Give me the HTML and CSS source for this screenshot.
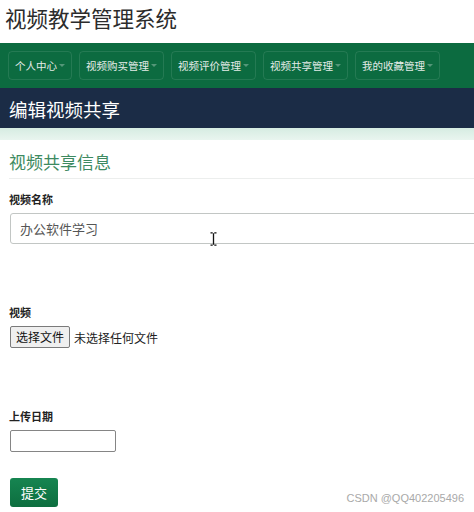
FILE: index.html
```html
<!DOCTYPE html>
<html lang="zh-CN">
<head>
  <meta charset="UTF-8" />
  <title>视频教学管理系统</title>
  <meta name="viewport" content="width=device-width, initial-scale=1.0">
  <link rel="stylesheet" href="styles.css">
</head>
<body>
  <div class="site-title">视频教学管理系统</div>

  <nav class="navbar">
    <a class="nav-item">个人中心</a>
    <a class="nav-item">视频购买管理</a>
    <a class="nav-item">视频评价管理</a>
    <a class="nav-item">视频共享管理</a>
    <a class="nav-item">我的收藏管理</a>
  </nav>

  <div class="page-head">编辑视频共享</div>
  <div class="page-strip"></div>

  <div class="content">
    <h3 class="section-title">视频共享信息</h3>

    <form class="share-form" onsubmit="return false;">
      <div class="field">
        <label>视频名称</label>
        <input type="text" class="text-input" value="办公软件学习">
        <svg class="ibeam" width="7" height="14" viewBox="0 0 7 14">
          <path d="M0.5 0.8h2.2M4.3 0.8h2.2M3.5 1.3v11.4M0.5 13.2h2.2M4.3 13.2h2.2" stroke="#111" stroke-width="1.3" fill="none"/>
        </svg>
      </div>

      <div class="field">
        <label>视频</label>
        <div class="file-row">
          <span class="file-btn">选择文件</span>
          <span class="file-name">未选择任何文件</span>
        </div>
      </div>

      <div class="field field-date">
        <label>上传日期</label>
        <input type="text" class="date-input">
      </div>

      <button class="submit-btn">提交</button>
    </form>
  </div>

  <div class="watermark">CSDN @QQ402205496</div>
</body>
</html>
```

FILE: styles.css
```css
html { overflow-x: hidden; }
body { margin: 0; font-family: "Noto Sans CJK SC", "Liberation Sans", sans-serif; color: #333; background: #fff; position: relative; min-height: 512px; overflow-x: hidden; }

.site-title { height: 43px; box-sizing: border-box; padding: 2px 5px 0; font-size: 21.5px; line-height: 32px; color: #2c2c2c; }

.navbar { background: #0c6b40; height: 45px; box-sizing: border-box; padding: 8px 8px; display: flex; gap: 7px; }
.nav-item { display: flex; align-items: center; height: 29px; box-sizing: border-box; padding: 0 6px; border: 1px solid rgba(255,255,255,0.1); border-radius: 4px; font-size: 10.5px; color: #e4ece8; }
.nav-item::after { content: ""; margin-left: 2px; border-left: 3px solid transparent; border-right: 3px solid transparent; border-top: 3px solid rgba(255,255,255,0.3); }

.page-head { background: #1b2c46; height: 40px; box-sizing: border-box; padding: 2px 9px 0; font-size: 18.5px; line-height: 38px; color: #fff; }
.page-strip { height: 12px; background: linear-gradient(#d6ece2, #e9f5ef); }

.content { padding: 0 0 0 9px; }
.section-title { margin: 10px 0 0; padding-bottom: 4px; font-size: 17px; font-weight: 400; line-height: 24px; color: #3d8a61; border-bottom: 1px solid #eceeed; }

.share-form { padding-top: 13px; }
.field { position: relative; margin-bottom: 61px; }
.field label { display: block; font-size: 11px; font-weight: 700; line-height: 14px; margin-bottom: 7px; color: #222; }
.text-input { display: block; width: calc(100% + 12px); height: 31px; box-sizing: border-box; margin-left: 1px; padding: 0 9px; border: 1px solid #c2c6c4; border-radius: 3px; font-family: inherit; font-size: 13px; color: #555; }
.ibeam { position: absolute; left: 201px; top: 40px; }

.file-row { display: flex; align-items: center; margin-left: 1px; }
.file-btn { height: 22px; box-sizing: border-box; padding: 0 5px; border: 1px solid #7a7a7a; border-radius: 2px; background: #efefef; font-size: 12px; line-height: 20px; color: #111; }
.file-name { margin-left: 4px; font-size: 12px; color: #222; }

.field-date { margin-bottom: 26px; }
.date-input { display: block; width: 106px; height: 22px; box-sizing: border-box; margin-left: 1px; border: 1px solid #858585; border-radius: 2px; }

.submit-btn { display: block; margin-left: 1px; width: 48px; height: 29px; border: none; border-radius: 3px; background: linear-gradient(#168551, #0d6e3f); color: #fff; font-family: inherit; font-size: 13px; cursor: pointer; }

.watermark { position: absolute; right: 10px; top: 492px; font-family: "Liberation Sans", sans-serif; font-size: 11px; color: #a9a9a9; }
```
